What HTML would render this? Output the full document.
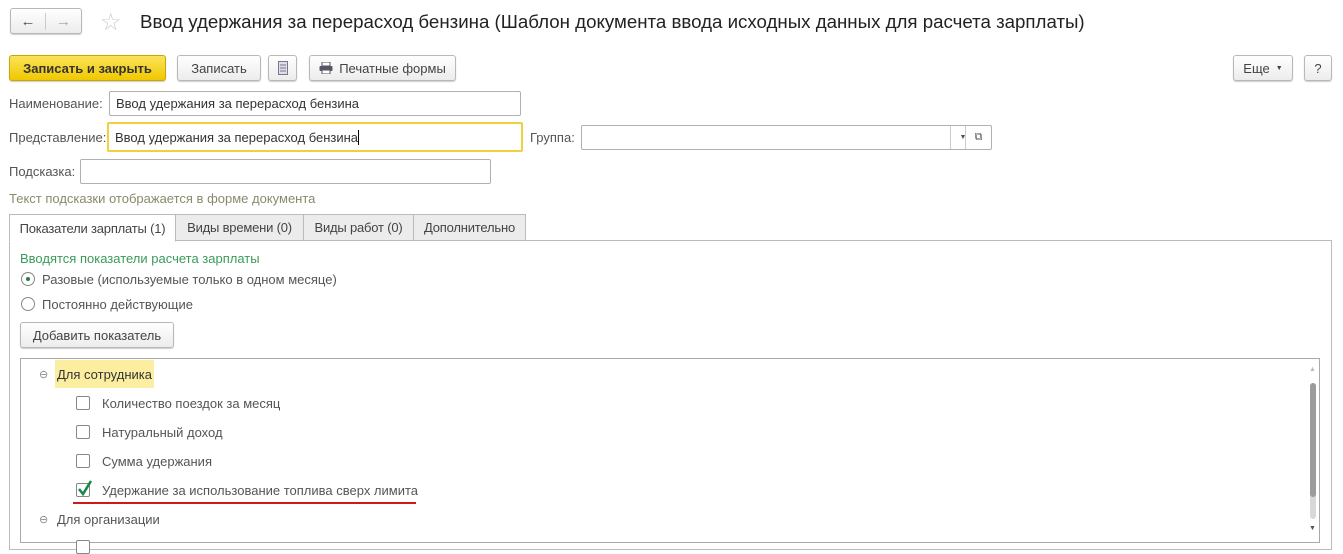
<!DOCTYPE html>
<html><head><meta charset="utf-8"><style>
*{box-sizing:border-box;margin:0;padding:0}
body{width:1343px;height:545px;overflow:hidden;background:#fff;font-family:"Liberation Sans",Arial,sans-serif;font-size:13px;color:#333;position:relative}
.a{position:absolute}
.btn{position:absolute;border:1px solid #b8b8b8;border-radius:3px;background:linear-gradient(#fff,#ececec);box-shadow:0 1px 1px rgba(0,0,0,.2);display:flex;align-items:center;justify-content:center;font-size:13px;color:#444}
.inp{position:absolute;border:1px solid #b0b0b0;border-radius:2px;background:#fff;font-size:13px;color:#333;padding-left:6px;display:flex;align-items:center}
.lbl{position:absolute;font-size:13px;color:#555}
.cb{position:absolute;width:14px;height:14px;border:1px solid #888;border-radius:2px;background:#fff}
.tab{position:absolute;top:214px;height:27px;border:1px solid #bbb;background:#ececec;font-size:13px;color:#444;display:flex;align-items:center;justify-content:center;letter-spacing:-0.2px}
</style></head><body>
<div class="btn" style="left:10px;top:8px;width:72px;height:26px;padding:0"><span style="width:36px;text-align:center;border-right:1px solid #ccc;font-size:15px;color:#555">&#8592;</span><span style="width:36px;text-align:center;font-size:15px;color:#aaa">&#8594;</span></div>
<div class="a" style="left:100px;top:8px;font-size:24px;color:#ccc">&#9734;</div>
<div class="a" style="left:140px;top:11px;font-size:18.7px;color:#222">Ввод удержания за перерасход бензина (Шаблон документа ввода исходных данных для расчета зарплаты)</div>

<div class="btn" style="left:9px;top:55px;width:157px;height:26px;background:linear-gradient(#fbe35a,#f0c800);border-color:#c9a800;font-weight:bold;color:#333">Записать и закрыть</div>
<div class="btn" style="left:177px;top:55px;width:84px;height:26px">Записать</div>
<div class="btn" style="left:268px;top:55px;width:29px;height:26px"><svg width="10" height="14"><rect x="0.5" y="0.5" width="9" height="13" fill="#dde" stroke="#778"/><path d="M2 4h6M2 7h6M2 10h6" stroke="#778"/></svg></div>
<div class="btn" style="left:309px;top:55px;width:147px;height:26px"><svg width="14" height="12" style="margin-right:6px"><rect x="3" y="0" width="8" height="4" fill="#fff" stroke="#556"/><rect x="0.5" y="4" width="13" height="5" rx="1" fill="#556"/><rect x="3" y="8" width="8" height="4" fill="#fff" stroke="#556"/></svg>Печатные формы</div>
<div class="btn" style="left:1233px;top:55px;width:60px;height:26px">Еще <span style="font-size:7px;margin-left:6px">&#9660;</span></div>
<div class="btn" style="left:1304px;top:55px;width:28px;height:26px">?</div>

<div class="lbl" style="left:9px;top:96px">Наименование:</div>
<div class="inp" style="left:109px;top:91px;width:412px;height:25px">Ввод удержания за перерасход бензина</div>
<div class="lbl" style="left:9px;top:130px">Представление:</div>
<div class="inp" style="left:107px;top:122px;width:416px;height:30px;border:2px solid #f0d040">Ввод удержания за перерасход бензина<span style="display:inline-block;width:1px;height:15px;background:#000"></span></div>
<div class="lbl" style="left:530px;top:130px">Группа:</div>
<div class="inp" style="left:581px;top:125px;width:411px;height:25px;padding:0"><div style="position:absolute;right:40px;top:0;bottom:0;border-left:1px solid #ccc;width:0"></div><div style="position:absolute;right:16px;top:0;bottom:0;width:24px;font-size:7px;color:#555;text-align:center;line-height:23px">&#9660;</div><div style="position:absolute;right:0;top:0;bottom:0;width:26px;border-left:1px solid #ccc;font-size:11px;text-align:center;line-height:23px;color:#555">&#10697;</div></div>
<div class="lbl" style="left:9px;top:164px">Подсказка:</div>
<div class="inp" style="left:80px;top:159px;width:411px;height:25px"></div>
<div class="lbl" style="left:9px;top:191px;color:#8a8a6a">Текст подсказки отображается в форме документа</div>

<div class="a" style="left:9px;top:240px;width:1323px;height:310px;border:1px solid #bbb"></div>
<div class="tab" style="left:9px;width:167px;background:#fff;border-bottom-color:#fff;height:28px">Показатели зарплаты (1)</div>
<div class="tab" style="left:175px;width:129px">Виды времени (0)</div>
<div class="tab" style="left:303px;width:111px">Виды работ (0)</div>
<div class="tab" style="left:413px;width:113px">Дополнительно</div>

<div class="lbl" style="left:20px;top:251px;color:#3a9a5a">Вводятся показатели расчета зарплаты</div>
<div class="a" style="left:21px;top:272px;width:14px;height:14px;border:1px solid #888;border-radius:50%"><div style="width:4px;height:4px;border-radius:50%;background:#2a7a4a;margin:4px"></div></div>
<div class="lbl" style="left:42px;top:272px">Разовые (используемые только в одном месяце)</div>
<div class="a" style="left:21px;top:297px;width:14px;height:14px;border:1px solid #888;border-radius:50%"></div>
<div class="lbl" style="left:42px;top:297px">Постоянно действующие</div>
<div class="btn" style="left:20px;top:322px;width:154px;height:26px">Добавить показатель</div>

<div class="a" style="left:20px;top:358px;width:1300px;height:185px;border:1px solid #aaa"></div>
<div class="a" style="left:1310px;top:383px;width:6px;height:136px;background:#d8d8d8;border-radius:3px"></div>
<div class="a" style="left:1310px;top:383px;width:6px;height:114px;background:#9c9c9c;border-radius:3px"></div>
<div class="a" style="left:1309px;top:366px;font-size:7px;color:#bbb">&#9650;</div>
<div class="a" style="left:1309px;top:525px;font-size:7px;color:#555">&#9660;</div>

<div class="a" style="left:39px;top:368px;font-size:11px;color:#888">&#8854;</div>
<div class="a" style="left:55px;top:360px;width:99px;height:28px;background:#fbeea0"></div>
<div class="lbl" style="left:57px;top:367px;color:#333">Для сотрудника</div>
<div class="cb" style="left:76px;top:396px"></div><div class="lbl" style="left:102px;top:396px">Количество поездок за месяц</div>
<div class="cb" style="left:76px;top:425px"></div><div class="lbl" style="left:102px;top:425px">Натуральный доход</div>
<div class="cb" style="left:76px;top:454px"></div><div class="lbl" style="left:102px;top:454px">Сумма удержания</div>
<div class="cb" style="left:76px;top:483px"></div>
<svg class="a" style="left:76px;top:478px" width="18" height="20"><path d="M3 11l4 5L15 3" stroke="#1a8a4a" stroke-width="2.6" fill="none"/></svg>
<div class="lbl" style="left:102px;top:483px">Удержание за использование топлива сверх лимита</div>
<div class="a" style="left:73px;top:502px;width:343px;height:2px;background:#d01818"></div>
<div class="a" style="left:39px;top:513px;font-size:11px;color:#888">&#8854;</div>
<div class="lbl" style="left:57px;top:512px">Для организации</div>
<div class="cb" style="left:76px;top:540px"></div>
</body></html>
